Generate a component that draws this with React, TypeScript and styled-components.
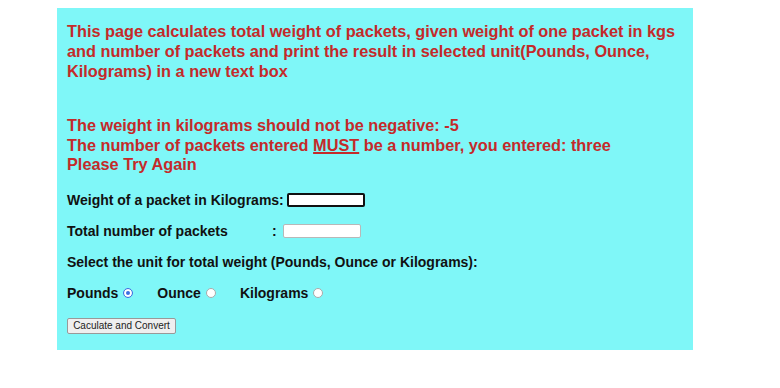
import styled, { createGlobalStyle } from "styled-components";

const GlobalStyle = createGlobalStyle`
  body {
    margin: 0;
    background: #ffffff;
    font-family: "Liberation Sans", Arial, sans-serif;
  }
`;

const Panel = styled.div`
  width: 636px;
  height: 342px;
  margin: 8px 0 0 57px;
  box-sizing: border-box;
  padding: 13px 10px 0 10px;
  background-color: #7ff7f8;
`;

const Message = styled.div<{ $gap?: number; $line?: number }>`
  margin-top: ${(p) => p.$gap || 0}px;
  color: #c42a2a;
  font-size: 16.3px;
  font-weight: bold;
  line-height: ${(p) => p.$line || 20}px;

  u {
    text-decoration-thickness: 2px;
  }
`;

const Form = styled.form`
  display: flex;
  flex-direction: column;
  gap: 15px;
  margin-top: 17px;
`;

const Row = styled.div`
  display: flex;
  align-items: center;
  height: 16px;
  color: #111;
  font-size: 14px;
  font-weight: bold;
`;

const Label = styled.span<{ $width?: number }>`
  display: inline-block;
  width: ${(p) => (p.$width ? p.$width + "px" : "auto")};
`;

const Colon = styled.span`
  margin-right: 3px;
`;

const TextBox = styled.input<{ $focused?: boolean }>`
  width: 78px;
  height: 14px;
  box-sizing: border-box;
  margin: 0 0 0 3px;
  padding: 0 2px;
  background: #fff;
  border: ${(p) => (p.$focused ? "2px solid #111" : "1px solid #b8b8b8")};
  border-radius: 2px;
  outline: none;
  font-size: 10px;
`;

const Option = styled.label`
  display: flex;
  align-items: center;
  margin-right: 24px;
`;

const Radio = styled.span<{ $checked?: boolean }>`
  display: inline-block;
  width: 10px;
  height: 10px;
  margin-left: 5px;
  box-sizing: border-box;
  border-radius: 50%;
  background: #fff;
  border: 1px solid ${(p) => (p.$checked ? "#3a6ee0" : "#aaa")};
  box-shadow: ${(p) => (p.$checked ? "inset 0 0 0 2px #fff, inset 0 0 0 5px #3a6ee0" : "none")};
`;

const Button = styled.button`
  align-self: flex-start;
  margin-top: 2px;
  height: 16px;
  width: 109px;
  padding: 0;
  font-family: "Liberation Sans", Arial, sans-serif;
  font-size: 10px;
  color: #222;
  background: #efefef;
  border: 1px solid #999;
  border-radius: 2px;
`;

export default function App() {
  return (
    <>
      <GlobalStyle />
      <Panel>
        <Message>
          This page calculates total weight of packets, given weight of one packet in kgs
          <br />
          and number of packets and print the result in selected unit(Pounds, Ounce,
          <br />
          Kilograms) in a new text box
        </Message>
        <Message $gap={35} $line={19.5}>
          The weight in kilograms should not be negative: -5
          <br />
          The number of packets entered <u>MUST</u> be a number, you entered: three
          <br />
          Please Try Again
        </Message>
        <Form onSubmit={(e) => e.preventDefault()}>
          <Row>
            <Label>Weight of a packet in Kilograms:</Label>
            <TextBox $focused />
          </Row>
          <Row>
            <Label $width={205}>Total number of packets</Label>
            <Colon>:</Colon>
            <TextBox />
          </Row>
          <Row>
            <Label>Select the unit for total weight (Pounds, Ounce or Kilograms):</Label>
          </Row>
          <Row>
            <Option>
              Pounds
              <Radio $checked />
            </Option>
            <Option>
              Ounce
              <Radio />
            </Option>
            <Option>
              Kilograms
              <Radio />
            </Option>
          </Row>
          <Button type="button">Caculate and Convert</Button>
        </Form>
      </Panel>
    </>
  );
}
